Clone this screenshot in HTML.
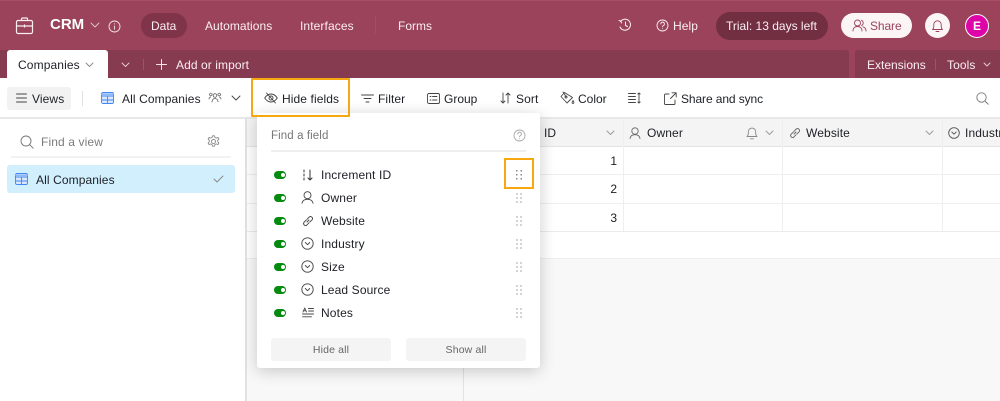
<!DOCTYPE html>
<html><head><meta charset="utf-8">
<style>
html,body{margin:0;padding:0;background:#fff}
#p{position:relative;width:1000px;height:401px;overflow:hidden;background:#fff;font-family:"Liberation Sans",sans-serif;font-size:12px;color:#1d1f25;filter:blur(.25px)}
#p div,#p span,#p svg{position:absolute}
.t{white-space:nowrap;line-height:16px}
.w{color:#fbeef1}
svg{fill:none;stroke-linecap:round;stroke-linejoin:round}
.tg{left:274px;width:12px;height:8px;border-radius:4px;background:#048a0e}
.kn{left:280.500px;width:4px;height:4px;border-radius:50%;background:#fff}
</style></head><body><div id="p">

<!-- top bars -->
<div style="left:0;top:0;width:1000px;height:78px;background:#9a435b"></div>
<div style="left:0;top:50px;width:849px;height:28px;background:#873b50;border-radius:0 3px 0 0"></div>
<div style="left:855px;top:50px;width:145px;height:28px;background:#873b50;border-radius:3px 0 0 0"></div>
<div style="left:0;top:0;width:1000px;height:1px;background:#a65068"></div>

<svg style="left:15px;top:17px" width="20" height="18" viewBox="0 0 20 18" stroke="#fbeef1" stroke-width="1.200"><rect x="1.500" y="3.500" width="16" height="13" rx="1.500"/><path d="M6.500 3.500V2a1 1 0 0 1 1-1h4a1 1 0 0 1 1 1v1.500M1.500 9h16M9.500 8v2"/></svg>
<div class="t" style="left:50px;top:16px;font-size:15px;font-weight:bold;color:#fff;line-height:18px">CRM</div>
<svg style="left:90px;top:22px" width="10" height="6" viewBox="0 0 10 6" stroke="#e4c3cd" stroke-width=".9"><path d="M1 1l4 4 4-4"/></svg>
<svg style="left:108px;top:20px" width="13" height="13" viewBox="0 0 13 13" stroke="#f4dfe5" stroke-width=".9"><circle cx="6.500" cy="6.500" r="5.500"/><path d="M6.500 6v3.300M6.500 3.700v.3"/></svg>

<div style="left:141px;top:13px;width:46px;height:25px;border-radius:13px;background:#803449"></div>
<div class="t w" style="left:151px;top:18px">Data</div>
<div class="t w" style="left:205px;top:18px;letter-spacing:.05px">Automations</div>
<div class="t w" style="left:300px;top:18px;letter-spacing:.1px">Interfaces</div>
<div style="left:375px;top:16px;width:1px;height:18px;background:#a04d65"></div>
<div class="t w" style="left:398px;top:18px;letter-spacing:0">Forms</div>

<svg style="left:618px;top:18px" width="14" height="14" viewBox="0 0 14 14" stroke="#fbeef1" stroke-width="1"><path d="M2.500 3.500A5.500 5.500 0 1 1 2 9"/><path d="M1 2.500l2 .5.500 2M7.500 4v3.500l2 1"/></svg>
<svg style="left:656px;top:19px" width="13" height="13" viewBox="0 0 13 13" stroke="#fbeef1" stroke-width=".9"><circle cx="6.500" cy="6.500" r="5.500"/><path d="M4.800 5a1.800 1.800 0 1 1 2.700 1.500c-.7.400-1 .8-1 1.300M6.500 9.600v.2"/></svg>
<div class="t w" style="left:673px;top:18px;letter-spacing:.1px">Help</div>
<div style="left:716px;top:12px;width:112px;height:28px;border-radius:14px;background:#712f41"></div>
<div class="t w" style="left:726px;top:18px;letter-spacing:0">Trial: 13 days left</div>
<div style="left:841px;top:13px;width:71px;height:25px;border-radius:13px;background:#fbf5f6"></div>
<svg style="left:852px;top:19px" width="15" height="13" viewBox="0 0 15 13" stroke="#9a435b" stroke-width=".9"><circle cx="5.500" cy="4" r="3"/><path d="M1 12c0-3 2-4.500 4.500-4.500S10 9 10 12M9.500 1.300a3 3 0 0 1 0 5.400M11 7.800c1.800.6 3 2 3 4.200"/></svg>
<div class="t" style="left:870px;top:18px;color:#9a435b;letter-spacing:-.1px">Share</div>
<div style="left:925px;top:13px;width:25px;height:25px;border-radius:50%;background:#fbf5f6"></div>
<svg style="left:931px;top:19px" width="13" height="14" viewBox="0 0 13 14" stroke="#9a435b" stroke-width=".9"><path d="M1.500 10.500c1-.8 1.300-1.800 1.300-3.500V5.500a3.700 3.700 0 0 1 7.400 0V7c0 1.700.3 2.700 1.300 3.500zM5 12.500h3"/></svg>
<div style="left:965px;top:14px;width:22px;height:22px;border-radius:50%;background:#dd04a8;border:1px solid #fff"></div>
<div class="t" style="left:965px;top:18px;width:24px;text-align:center;color:#fff;font-weight:bold">E</div>

<!-- tab row -->
<div style="left:7px;top:50px;width:101px;height:28px;background:#fff;border-radius:3px 3px 0 0"></div>
<div class="t" style="left:18px;top:57px;letter-spacing:.12px">Companies</div>
<svg style="left:85px;top:62px" width="9" height="6" viewBox="0 0 9 6" stroke="#888" stroke-width=".9"><path d="M1 1l3.500 3.500L8 1"/></svg>
<svg style="left:121px;top:62px" width="9" height="6" viewBox="0 0 9 6" stroke="#e8ccd4" stroke-width=".9"><path d="M1 1l3.500 3.500L8 1"/></svg>
<div style="left:143px;top:59px;width:1px;height:11px;background:#9d5268"></div>
<svg style="left:156px;top:59px" width="11" height="11" viewBox="0 0 11 11" stroke="#f6e6ea" stroke-width="1"><path d="M5.500 .5v10M.5 5.500h10"/></svg>
<div class="t w" style="left:176px;top:57px;letter-spacing:.08px">Add or import</div>
<div class="t w" style="left:867px;top:57px;letter-spacing:0">Extensions</div>
<div style="left:935px;top:59px;width:1px;height:11px;background:#9d5268"></div>
<div class="t w" style="left:947px;top:57px;letter-spacing:.1px">Tools</div>
<svg style="left:983px;top:62px" width="8" height="6" viewBox="0 0 8 6" stroke="#e8ccd4" stroke-width=".9"><path d="M1 1l3 3 3-3"/></svg>

<!-- toolbar -->
<div style="left:0;top:117px;width:1000px;height:2px;background:#e8e8e8"></div>
<div style="left:7px;top:87px;width:64px;height:23px;border-radius:3px;background:#f2f2f2"></div>
<svg style="left:16px;top:93px" width="11" height="10" viewBox="0 0 11 10" stroke="#444" stroke-width=".9"><path d="M.5 1h10M.5 5h10M.5 9h10"/></svg>
<div class="t" style="left:32px;top:90.500px;letter-spacing:.1px">Views</div>
<div style="left:82px;top:91px;width:1px;height:15px;background:#e0e0e0"></div>
<svg style="left:101px;top:92px" width="13" height="12" viewBox="0 0 13 12" stroke="#3f87f5" stroke-width=".9"><rect x=".5" y=".5" width="12" height="11" rx="1.500" fill="#dbe8fc"/><path d="M.5 4h12M.5 8h12M6.500 4v7.500"/><path d="M1 2.200h11" stroke-width="1.500" stroke="#8db8f8"/></svg>
<div class="t" style="left:122px;top:90.500px;letter-spacing:.1px">All Companies</div>
<svg style="left:208px;top:92px" width="14" height="12" viewBox="0 0 14 12" stroke="#555" stroke-width=".8"><circle cx="7" cy="3.500" r="1.800" stroke-dasharray="1 .8"/><circle cx="2.800" cy="2.500" r="1.300" stroke-dasharray="1 .8"/><circle cx="11.200" cy="2.500" r="1.300" stroke-dasharray="1 .8"/><path d="M4 10c0-2 1.300-3.500 3-3.500S10 8 10 10M1 7c0-1 .7-2 1.800-2M13 7c0-1-.7-2-1.800-2" stroke-dasharray="1 .8"/></svg>
<svg style="left:231px;top:95px" width="10" height="7" viewBox="0 0 10 7" stroke="#444" stroke-width=".9"><path d="M1 1l4 4 4-4"/></svg>

<svg style="left:264px;top:92px" width="14" height="12" viewBox="0 0 14 12" stroke="#444" stroke-width=".9"><path d="M.7 6C2.500 3.300 4.500 2 7 2s4.500 1.300 6.300 4C11.500 8.700 9.500 10 7 10S2.500 8.700.7 6z"/><circle cx="7" cy="6" r="2"/><path d="M2.500 1l9 10"/></svg>
<div class="t" style="left:282px;top:90.500px;letter-spacing:.1px">Hide fields</div>
<svg style="left:361px;top:94px" width="13" height="9" viewBox="0 0 13 9" stroke="#444" stroke-width=".9"><path d="M.5 1h12M3 4.500h7M5 8h3"/></svg>
<div class="t" style="left:378px;top:90.500px;letter-spacing:.1px">Filter</div>
<svg style="left:427px;top:93px" width="13" height="11" viewBox="0 0 13 11" stroke="#444" stroke-width=".9"><rect x=".5" y=".5" width="12" height="10" rx="1.500"/><path d="M3 3.500h1M5.500 3.500H10M3 7h1M5.500 7H10"/></svg>
<div class="t" style="left:444px;top:90.500px;letter-spacing:0">Group</div>
<svg style="left:500px;top:92px" width="11" height="12" viewBox="0 0 11 12" stroke="#444" stroke-width=".9"><path d="M3 1v10M1 9l2 2 2-2M8 11V1M6 3l2-2 2 2"/></svg>
<div class="t" style="left:516px;top:90.500px;letter-spacing:.1px">Sort</div>
<svg style="left:560px;top:91px" width="15" height="14" viewBox="0 0 15 14" stroke="#444" stroke-width=".9"><path d="M4.500 1.500L1 5.500l6 6.500 5.500-5.500z"/><circle cx="6" cy="6" r="1"/><path d="M6 5.500L3 1M13 9.500c.7 1 .9 1.500.9 2a.9.900 0 0 1-1.800 0c0-.5.200-1 .9-2z"/></svg>
<div class="t" style="left:578px;top:90.500px;letter-spacing:0">Color</div>
<svg style="left:628px;top:92px" width="13" height="12" viewBox="0 0 13 12" stroke="#444" stroke-width=".9"><path d="M.5 1.500h7M.5 4.500h7M.5 7.500h7M.5 10.500h7M11 1v10M9.800 2l1.200-1 1.200 1M9.800 10l1.200 1 1.200-1"/></svg>
<svg style="left:664px;top:92px" width="13" height="13" viewBox="0 0 13 13" stroke="#444" stroke-width=".9"><path d="M5 2H1.500a1 1 0 0 0-1 1v8.500a1 1 0 0 0 1 1H10a1 1 0 0 0 1-1V8M8 .8h4.200V5M12 1L6.500 6.500"/></svg>
<div class="t" style="left:681px;top:90.500px;letter-spacing:-.1px">Share and sync</div>
<svg style="left:976px;top:92px" width="13" height="13" viewBox="0 0 13 13" stroke="#777" stroke-width=".9"><circle cx="5.500" cy="5.500" r="4.700"/><path d="M9 9l3.300 3.300"/></svg>

<!-- sidebar -->
<div style="left:245px;top:118px;width:2px;height:283px;background:#e2e2e2"></div>
<svg style="left:20px;top:135px" width="14" height="14" viewBox="0 0 14 14" stroke="#777" stroke-width=".9"><circle cx="6" cy="6" r="5"/><path d="M9.700 9.700l3.500 3.500"/></svg>
<div class="t" style="left:41px;top:134px;color:#7c7c7c;letter-spacing:.12px">Find a view</div>
<svg style="left:207px;top:135px" width="13" height="13" viewBox="0 0 13 13" stroke="#888" stroke-width=".9"><circle cx="6.500" cy="6.500" r="2"/><path d="M5.500 .8h2l.4 1.600 1.500.7 1.500-.7 1 1.700-1.200 1.200v1.400l1.200 1.200-1 1.700-1.500-.7-1.500.7-.4 1.600h-2l-.4-1.600-1.500-.7-1.500.7-1-1.700 1.200-1.200V5.300L1.100 4.100l1-1.700 1.500.7 1.500-.7z"/></svg>
<div style="left:11px;top:156px;width:220px;height:2px;background:#f2f2f2"></div>
<div style="left:7px;top:165px;width:228px;height:28px;border-radius:3px;background:#d1effc"></div>
<svg style="left:15px;top:173px" width="13" height="12" viewBox="0 0 13 12" stroke="#3f87f5" stroke-width=".9"><rect x=".5" y=".5" width="12" height="11" rx="1.500" fill="#dbe8fc"/><path d="M.5 4h12M.5 8h12M6.500 4v7.500"/><path d="M1 2.200h11" stroke-width="1.500" stroke="#8db8f8"/></svg>
<div class="t" style="left:36px;top:171.500px;letter-spacing:.1px">All Companies</div>
<svg style="left:213px;top:175px" width="11" height="8" viewBox="0 0 11 8" stroke="#888" stroke-width=".9"><path d="M1 4l3 3 6-6"/></svg>

<!-- grid -->
<div style="left:247px;top:119px;width:753px;height:27px;background:#f4f4f4"></div>
<div style="left:247px;top:146px;width:753px;height:1px;background:#e4e4e4"></div>
<div style="left:247px;top:174px;width:753px;height:1px;background:#eeeeee"></div>
<div style="left:247px;top:203px;width:753px;height:1px;background:#eeeeee"></div>
<div style="left:247px;top:231px;width:753px;height:1px;background:#ebebeb"></div>
<div style="left:247px;top:258px;width:753px;height:143px;background:#f8f8f8;border-top:1px solid #eeeeee;box-sizing:border-box"></div>
<div style="left:463px;top:258px;width:1px;height:143px;background:#e2e2e2"></div>
<div style="left:623px;top:119px;width:1px;height:112px;background:#efefef"></div>
<div style="left:782px;top:119px;width:1px;height:112px;background:#efefef"></div>
<div style="left:942px;top:119px;width:1px;height:112px;background:#efefef"></div>
<div class="t" style="left:544px;top:125px;letter-spacing:.1px">ID</div>
<svg style="left:606px;top:130px" width="9" height="6" viewBox="0 0 9 6" stroke="#999" stroke-width=".9"><path d="M1 1l3.500 3.500L8 1"/></svg>
<svg style="left:629px;top:127px" width="12" height="12" viewBox="0 0 12 12" stroke="#666" stroke-width=".9"><circle cx="6" cy="4" r="3.200"/><path d="M1 11.500c.4-2.500 2.300-3.800 5-3.800s4.600 1.300 5 3.800"/></svg>
<div class="t" style="left:647px;top:125px;letter-spacing:.12px">Owner</div>
<svg style="left:746px;top:127px" width="12" height="13" viewBox="0 0 12 13" stroke="#888" stroke-width=".9"><path d="M1 9.500c1-.8 1.300-1.800 1.300-3.500V4.800a3.700 3.700 0 0 1 7.400 0V6c0 1.700.3 2.700 1.300 3.500zM4.500 11.800h3"/></svg>
<svg style="left:765px;top:130px" width="9" height="6" viewBox="0 0 9 6" stroke="#999" stroke-width=".9"><path d="M1 1l3.500 3.500L8 1"/></svg>
<svg style="left:789px;top:127px" width="12" height="12" viewBox="0 0 12 12" stroke="#666" stroke-width=".9"><path d="M5 7l2-2M4.300 5L2 7.300a2 2 0 0 0 2.800 2.800L7 7.800M5 4.300L7.300 2a2 2 0 0 1 2.800 2.800L7.800 7"/></svg>
<div class="t" style="left:806px;top:125px;letter-spacing:.12px">Website</div>
<svg style="left:925px;top:130px" width="9" height="6" viewBox="0 0 9 6" stroke="#999" stroke-width=".9"><path d="M1 1l3.500 3.500L8 1"/></svg>
<svg style="left:948px;top:127px" width="12" height="12" viewBox="0 0 12 12" stroke="#555" stroke-width=".9"><circle cx="6" cy="6" r="5.300"/><path d="M3.800 5l2.200 2.200L8.200 5"/></svg>
<div class="t" style="left:965px;top:125px;letter-spacing:.12px">Industry</div>
<div class="t" style="left:580px;top:153px;width:37px;text-align:right">1</div>
<div class="t" style="left:580px;top:181px;width:37px;text-align:right">2</div>
<div class="t" style="left:580px;top:210px;width:37px;text-align:right">3</div>

<!-- popup -->
<div style="left:257px;top:113px;width:283px;height:255px;background:#fff;border-radius:3px;box-shadow:0 3px 16px rgba(0,0,0,.2)"></div>
<div style="left:251px;top:78px;width:95px;height:35px;border:2px solid #f7a70f;border-radius:1px;box-sizing:content-box"></div>
<div class="t" style="left:271px;top:128px;color:#777;letter-spacing:.1px;font-size:11.500px">Find a field</div>
<svg style="left:513px;top:129px" width="13" height="13" viewBox="0 0 13 13" stroke="#aaa" stroke-width=".9"><circle cx="6.500" cy="6.500" r="5.500"/><path d="M4.800 5a1.800 1.800 0 1 1 2.700 1.500c-.7.400-1 .8-1 1.300M6.500 9.600v.2"/></svg>
<div style="left:271px;top:150px;width:255px;height:2px;background:#eeeeee"></div>

<!-- toggles -->
<div class="tg" style="top:171px"></div><div class="kn" style="top:173px"></div>
<div class="tg" style="top:194px"></div><div class="kn" style="top:196px"></div>
<div class="tg" style="top:217px"></div><div class="kn" style="top:219px"></div>
<div class="tg" style="top:240px"></div><div class="kn" style="top:242px"></div>
<div class="tg" style="top:263px"></div><div class="kn" style="top:265px"></div>
<div class="tg" style="top:286px"></div><div class="kn" style="top:288px"></div>
<div class="tg" style="top:309px"></div><div class="kn" style="top:311px"></div>

<!-- field icons -->
<svg style="left:302px;top:169px" width="11" height="12" viewBox="0 0 11 12" stroke="#333" stroke-width="1"><path d="M2 1v2M2 5v2M2 9v2M8 1v10M6 9l2 2 2-2"/></svg>
<svg style="left:301px;top:191px" width="13" height="13" viewBox="0 0 13 13" stroke="#444" stroke-width=".9"><circle cx="6.500" cy="4.200" r="3.500"/><path d="M1 12.300c.4-2.500 2.500-4 5.500-4s5.100 1.500 5.500 4"/></svg>
<svg style="left:302px;top:215px" width="12" height="12" viewBox="0 0 12 12" stroke="#444" stroke-width=".9"><path d="M5 7l2-2M4.300 5L2 7.300a2 2 0 0 0 2.800 2.800L7 7.800M5 4.300L7.300 2a2 2 0 0 1 2.800 2.800L7.800 7"/></svg>
<svg style="left:301px;top:237px" width="13" height="13" viewBox="0 0 13 13" stroke="#444" stroke-width=".9"><circle cx="6.500" cy="6.500" r="5.700"/><path d="M4.300 5.500l2.200 2.200 2.200-2.200"/></svg>
<svg style="left:301px;top:260px" width="13" height="13" viewBox="0 0 13 13" stroke="#444" stroke-width=".9"><circle cx="6.500" cy="6.500" r="5.700"/><path d="M4.300 5.500l2.200 2.200 2.200-2.200"/></svg>
<svg style="left:301px;top:283px" width="13" height="13" viewBox="0 0 13 13" stroke="#444" stroke-width=".9"><circle cx="6.500" cy="6.500" r="5.700"/><path d="M4.300 5.500l2.200 2.200 2.200-2.200"/></svg>
<svg style="left:302px;top:307px" width="12" height="11" viewBox="0 0 12 11" stroke="#444" stroke-width=".9"><path d="M1 5l1.700-4L4.500 5M1.700 3.800h2M6.500 1.500h5M6.500 4h5M.5 7h11M.5 9.800h9"/></svg>

<div class="t" style="left:321px;top:167px;letter-spacing:.13px">Increment ID</div>
<div class="t" style="left:321px;top:190px;letter-spacing:.13px">Owner</div>
<div class="t" style="left:321px;top:213px;letter-spacing:.13px">Website</div>
<div class="t" style="left:321px;top:236px;letter-spacing:.13px">Industry</div>
<div class="t" style="left:321px;top:259px;letter-spacing:.13px">Size</div>
<div class="t" style="left:321px;top:282px;letter-spacing:.13px">Lead Source</div>
<div class="t" style="left:321px;top:305px;letter-spacing:.13px">Notes</div>

<!-- drag handles -->
<svg style="left:515px;top:169px" width="8" height="12" viewBox="0 0 8 12"><g fill="#888"><rect x="1" y="1" width="1.500" height="1.500"/><rect x="5.500" y="1" width="1.500" height="1.500"/><rect x="1" y="5" width="1.500" height="1.500"/><rect x="5.500" y="5" width="1.500" height="1.500"/><rect x="1" y="9" width="1.500" height="1.500"/><rect x="5.500" y="9" width="1.500" height="1.500"/></g></svg>
<svg style="left:515px;top:192px" width="8" height="12" viewBox="0 0 8 12"><g fill="#d4d4d4"><rect x="1" y="1" width="2" height="2"/><rect x="5" y="1" width="2" height="2"/><rect x="1" y="5" width="2" height="2"/><rect x="5" y="5" width="2" height="2"/><rect x="1" y="9" width="2" height="2"/><rect x="5" y="9" width="2" height="2"/></g></svg>
<svg style="left:515px;top:215px" width="8" height="12" viewBox="0 0 8 12"><g fill="#d4d4d4"><rect x="1" y="1" width="2" height="2"/><rect x="5" y="1" width="2" height="2"/><rect x="1" y="5" width="2" height="2"/><rect x="5" y="5" width="2" height="2"/><rect x="1" y="9" width="2" height="2"/><rect x="5" y="9" width="2" height="2"/></g></svg>
<svg style="left:515px;top:238px" width="8" height="12" viewBox="0 0 8 12"><g fill="#d4d4d4"><rect x="1" y="1" width="2" height="2"/><rect x="5" y="1" width="2" height="2"/><rect x="1" y="5" width="2" height="2"/><rect x="5" y="5" width="2" height="2"/><rect x="1" y="9" width="2" height="2"/><rect x="5" y="9" width="2" height="2"/></g></svg>
<svg style="left:515px;top:261px" width="8" height="12" viewBox="0 0 8 12"><g fill="#d4d4d4"><rect x="1" y="1" width="2" height="2"/><rect x="5" y="1" width="2" height="2"/><rect x="1" y="5" width="2" height="2"/><rect x="5" y="5" width="2" height="2"/><rect x="1" y="9" width="2" height="2"/><rect x="5" y="9" width="2" height="2"/></g></svg>
<svg style="left:515px;top:284px" width="8" height="12" viewBox="0 0 8 12"><g fill="#d4d4d4"><rect x="1" y="1" width="2" height="2"/><rect x="5" y="1" width="2" height="2"/><rect x="1" y="5" width="2" height="2"/><rect x="5" y="5" width="2" height="2"/><rect x="1" y="9" width="2" height="2"/><rect x="5" y="9" width="2" height="2"/></g></svg>
<svg style="left:515px;top:307px" width="8" height="12" viewBox="0 0 8 12"><g fill="#d4d4d4"><rect x="1" y="1" width="2" height="2"/><rect x="5" y="1" width="2" height="2"/><rect x="1" y="5" width="2" height="2"/><rect x="5" y="5" width="2" height="2"/><rect x="1" y="9" width="2" height="2"/><rect x="5" y="9" width="2" height="2"/></g></svg>
<div style="left:504px;top:158px;width:26px;height:27px;border:2px solid #f7a70f"></div>

<!-- buttons -->
<div style="left:271px;top:338px;width:120px;height:23px;border-radius:3px;background:#f4f4f4"></div>
<div class="t" style="left:271px;top:342px;width:120px;text-align:center;font-size:10.500px;color:#666;letter-spacing:.15px">Hide all</div>
<div style="left:406px;top:338px;width:120px;height:23px;border-radius:3px;background:#f4f4f4"></div>
<div class="t" style="left:406px;top:342px;width:120px;text-align:center;font-size:10.500px;color:#666;letter-spacing:.15px">Show all</div>

</div></body></html>
